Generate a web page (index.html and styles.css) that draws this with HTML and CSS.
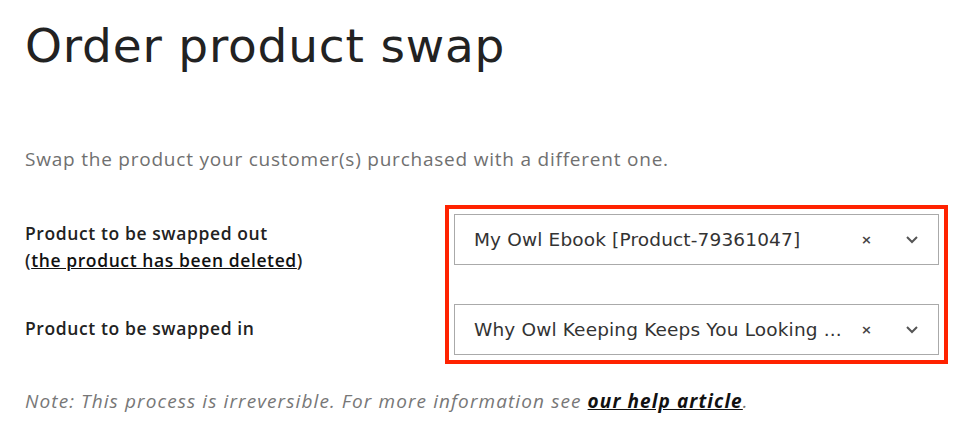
FILE: index.html
```html
<!DOCTYPE html>
<html>
<head>
<meta charset="utf-8">
<link rel="stylesheet" href="styles.css">
</head>
<body>
<main class="page">
  <h1 class="title">Order product swap</h1>
  <p class="intro">Swap the product your customer(s) purchased with a different one.</p>
  <section class="form">
    <div class="labels">
      <div class="label label-out">Product to be swapped out<br>(<a class="label-link" href="#">the product has been deleted</a>)</div>
      <div class="label label-in">Product to be swapped in</div>
    </div>
    <div class="highlight">
      <div class="select">
        <span class="select-value">My Owl Ebook [Product-79361047]</span>
        <span class="select-clear">×</span>
        <svg class="select-arrow" width="14" height="9" viewBox="0 0 14 9"><path d="M2 2 L7 7 L12 2" fill="none" stroke="#555" stroke-width="2"/></svg>
      </div>
      <div class="select">
        <span class="select-value">Why Owl Keeping Keeps You Looking ...</span>
        <span class="select-clear">×</span>
        <svg class="select-arrow" width="14" height="9" viewBox="0 0 14 9"><path d="M2 2 L7 7 L12 2" fill="none" stroke="#555" stroke-width="2"/></svg>
      </div>
    </div>
  </section>
  <p class="note">Note: This process is irreversible. For more information see <a class="note-link" href="#">our help article</a>.</p>
</main>
</body>
</html>
```
FILE: styles.css
```css
html, body { margin: 0; padding: 0; background: #fff; }
.page { padding: 0 0 0 25px; width: 955px; }
.title {
  font-family: "DejaVu Sans", sans-serif;
  font-weight: 400;
  font-size: 47px;
  line-height: 52px;
  color: #222;
  margin: 0;
  padding-top: 20px;
  letter-spacing: 0.8px;
}
.intro {
  font-family: "Open Sans", sans-serif;
  font-size: 19px;
  line-height: 24px;
  color: #707070;
  letter-spacing: 0.78px;
  margin: 75px 0 0 0;
}
.form {
  display: flex;
  margin-top: 34px;
}
.labels {
  width: 420px;
  display: flex;
  flex-direction: column;
}
.label {
  font-family: "Open Sans", sans-serif;
  font-weight: 600;
  font-size: 17.5px;
  line-height: 27px;
  letter-spacing: 0.6px;
  color: #222;
}
.label-out { padding-top: 15px; }
.label-in { padding-top: 41px; }
.label-link { color: #111; text-decoration: underline; }
.highlight {
  border: 4px solid #ff2200;
  padding: 5px;
  display: flex;
  flex-direction: column;
  gap: 39px;
  width: 485px;
}
.select {
  box-sizing: border-box;
  height: 51px;
  border: 1px solid #aaa;
  display: flex;
  align-items: center;
  padding: 0 19px 0 19px;
}
.select-value {
  flex: 1;
  font-family: "DejaVu Sans", sans-serif;
  font-size: 18.5px;
  letter-spacing: 0.15px;
  color: #333;
  white-space: nowrap;
}
.select-clear {
  font-family: "DejaVu Sans", sans-serif;
  font-weight: bold;
  font-size: 13px;
  color: #444;
  width: 12px;
  margin: 0 32px 0 4px;
}
.select-arrow { display: block; }
.note {
  font-family: "Open Sans", sans-serif;
  font-style: italic;
  font-size: 19px;
  line-height: 24px;
  color: #777;
  letter-spacing: 1.1px;
  margin: 25px 0 0 0;
}
.note-link { color: #111; font-weight: 700; text-decoration: underline; }
```
